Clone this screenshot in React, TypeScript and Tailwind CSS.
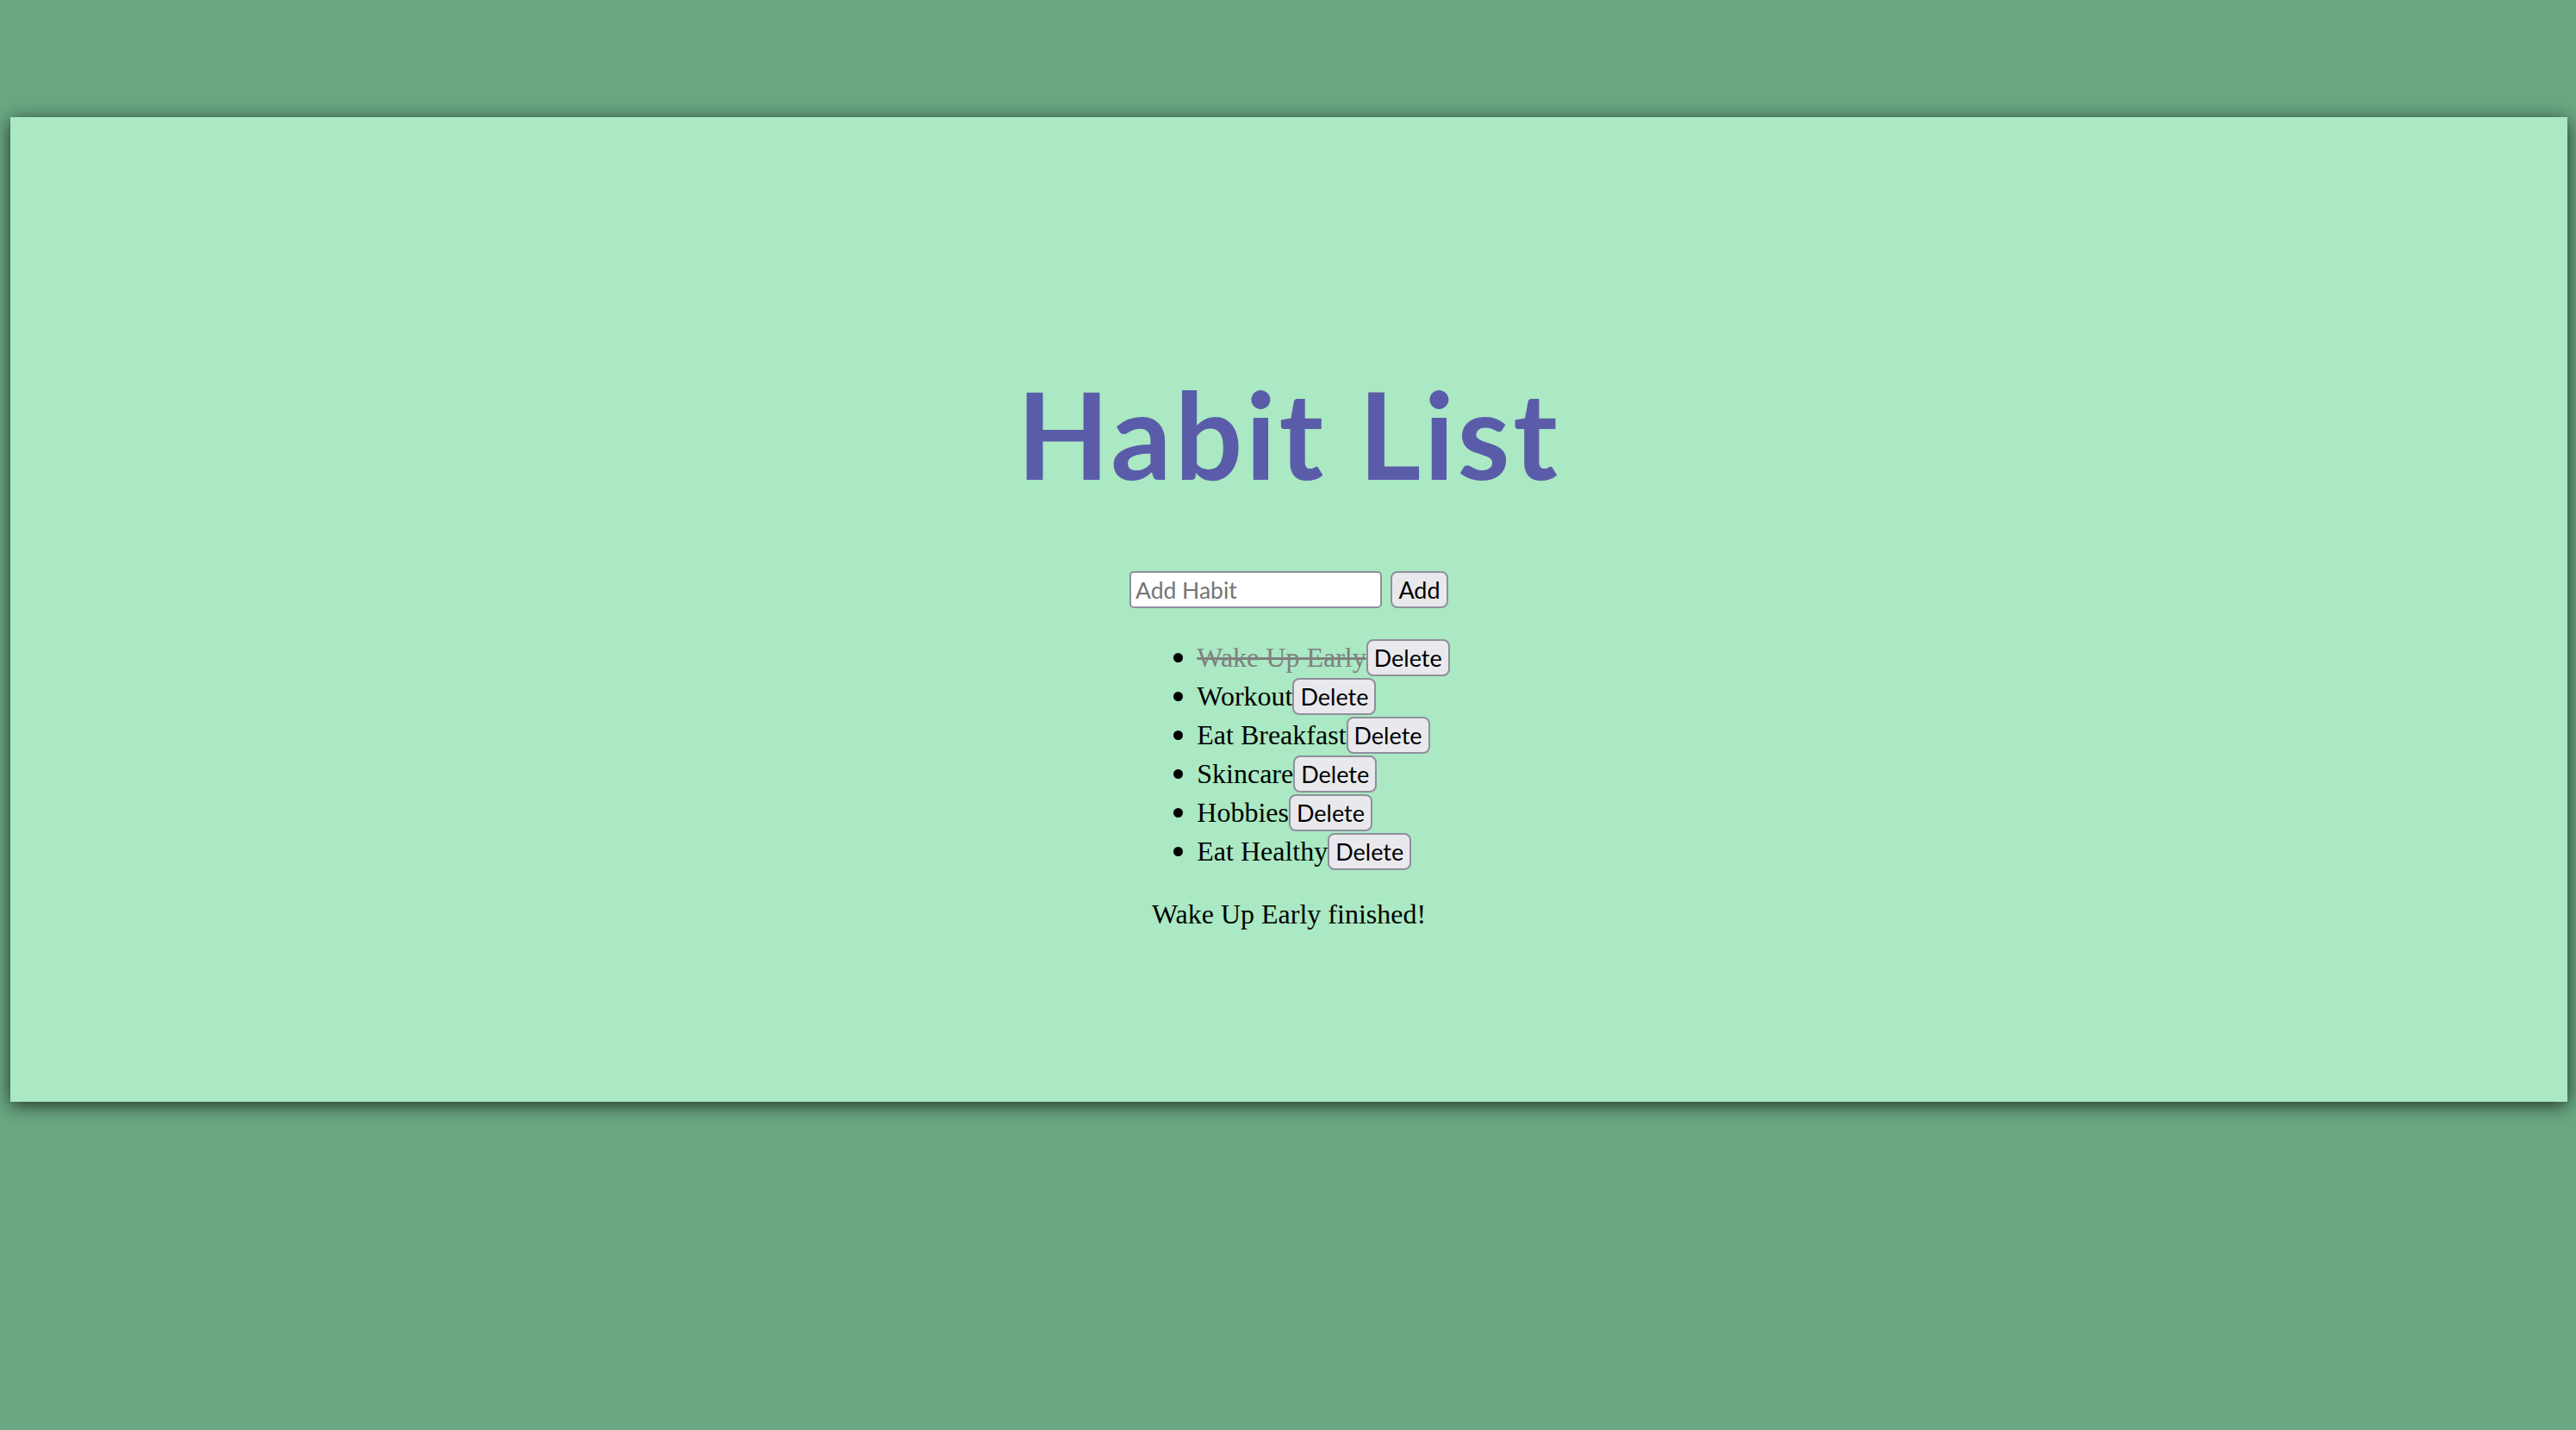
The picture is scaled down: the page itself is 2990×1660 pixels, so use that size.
const habits = [
  { name: "Wake Up Early", done: true },
  { name: "Workout", done: false },
  { name: "Eat Breakfast", done: false },
  { name: "Skincare", done: false },
  { name: "Hobbies", done: false },
  { name: "Eat Healthy", done: false },
]

const uiFont = "font-['Lato','Noto_Sans',sans-serif]"

export default function App() {
  return (
    <div className="h-[1660px] w-[2990px] overflow-hidden bg-[#6aa782] pt-[136px] pl-[12px]">
      <div className="flex h-[1143px] w-[2968px] flex-col items-center bg-[#aae9c3] shadow-[0_4px_20px_rgba(0,0,0,0.7)] font-['Liberation_Serif','Times_New_Roman',serif] text-[32px] text-black">
        <h1
          className={`mt-[298px] text-[139px] leading-none font-bold tracking-[3.5px] text-[#5a5ca9] ${uiFont}`}
        >
          Habit List
        </h1>

        <div className="mt-[90px] flex items-center">
          <input
            type="text"
            placeholder="Add Habit"
            className={`h-[43px] w-[293px] rounded-[5px] border-2 border-[#8f8f9d] bg-white px-[5px] text-[26.5px] text-black outline-none placeholder:text-[#757575] ${uiFont}`}
          />
          <button
            type="button"
            className={`ml-[10px] h-[43px] w-[67px] rounded-[8px] border-2 border-[#8f8f9d] bg-[#e9e9ed] text-[27px] text-black ${uiFont}`}
          >
            Add
          </button>
        </div>

        <ul className="mt-[33px] flex w-fit flex-col">
          {habits.map((h) => (
            <li key={h.name} className="flex h-[45px] items-baseline">
              <span className="mt-[19px] mr-[16px] ml-[53px] size-[11px] shrink-0 self-start rounded-full bg-black" />
              <span className={h.done ? "text-[#808080] line-through" : ""}>
                {h.name}
              </span>
              <button
                type="button"
                className={`h-[43px] w-[97px] rounded-[8px] border-2 border-[#8f8f9d] bg-[#e9e9ed] text-[27px] text-black ${uiFont}`}
              >
                Delete
              </button>
            </li>
          ))}
        </ul>

        <p className="mt-[28px]">Wake Up Early finished!</p>
      </div>
    </div>
  )
}
